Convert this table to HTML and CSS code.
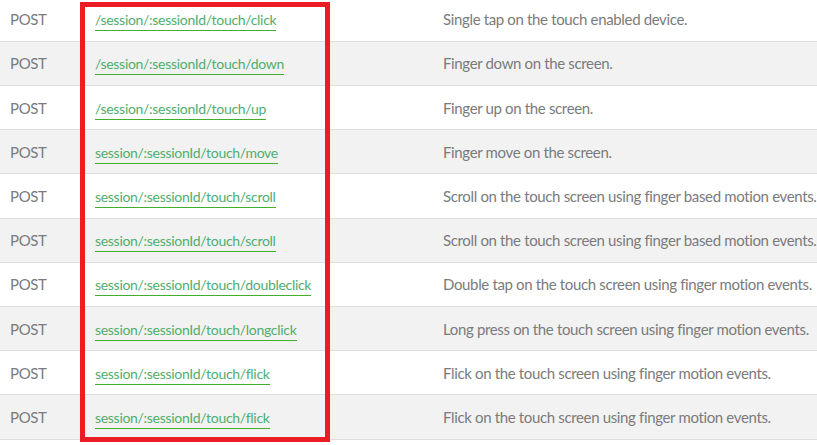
FILE: index.html
```html
<!DOCTYPE html>
<html>
<head>
<meta charset="utf-8">
<link rel="stylesheet" href="styles.css">
</head>
<body>
<div class="page">
  <table class="api">
    <tbody>
      <tr><td class="method">POST</td><td class="path"><a href="#">/session/:sessionId/touch/click</a></td><td class="desc">Single tap on the touch enabled device.</td></tr>
      <tr class="alt"><td class="method">POST</td><td class="path"><a href="#">/session/:sessionId/touch/down</a></td><td class="desc">Finger down on the screen.</td></tr>
      <tr><td class="method">POST</td><td class="path"><a href="#">/session/:sessionId/touch/up</a></td><td class="desc">Finger up on the screen.</td></tr>
      <tr class="alt"><td class="method">POST</td><td class="path"><a href="#">session/:sessionId/touch/move</a></td><td class="desc">Finger move on the screen.</td></tr>
      <tr><td class="method">POST</td><td class="path"><a href="#">session/:sessionId/touch/scroll</a></td><td class="desc">Scroll on the touch screen using finger based motion events.</td></tr>
      <tr class="alt"><td class="method">POST</td><td class="path"><a href="#">session/:sessionId/touch/scroll</a></td><td class="desc">Scroll on the touch screen using finger based motion events.</td></tr>
      <tr><td class="method">POST</td><td class="path"><a href="#">session/:sessionId/touch/doubleclick</a></td><td class="desc">Double tap on the touch screen using finger motion events.</td></tr>
      <tr class="alt"><td class="method">POST</td><td class="path"><a href="#">session/:sessionId/touch/longclick</a></td><td class="desc">Long press on the touch screen using finger motion events.</td></tr>
      <tr><td class="method">POST</td><td class="path"><a href="#">session/:sessionId/touch/flick</a></td><td class="desc">Flick on the touch screen using finger motion events.</td></tr>
      <tr class="alt"><td class="method">POST</td><td class="path"><a href="#">session/:sessionId/touch/flick</a></td><td class="desc">Flick on the touch screen using finger motion events.</td></tr>
    </tbody>
  </table>
  <div class="highlight"></div>
</div>
</body>
</html>
```

FILE: styles.css
```css
html, body {
  margin: 0;
  padding: 0;
  background: #fff;
}
.page {
  position: relative;
  width: 817px;
  height: 445px;
  overflow: hidden;
}
.api {
  border-collapse: collapse;
  margin-top: -3px;
  width: 900px;
  table-layout: fixed;
  font-family: Lato, "Open Sans", sans-serif;
  font-size: 15px;
  letter-spacing: -0.35px;
  color: #7b7b7b;
}
.api tr {
  height: 44.22px;
  border-bottom: 1px solid #dedede;
  background: #fff;
}
.api tr.alt {
  background: #f2f2f2;
}
.api td {
  padding: 0 0 0 10px;
  vertical-align: middle;
  white-space: nowrap;
}
.api td.method {
  width: 70px;
}
.api td.path {
  width: 338px;
  padding-left: 15px;
}
.api td.desc {
  padding-left: 10px;
}
.api a {
  font-size: 14px;
  letter-spacing: -0.3px;
  color: #4fae6e;
  text-decoration: none;
  border-bottom: 1px solid #42ae2e;
  padding-bottom: 2px;
}
.highlight {
  position: absolute;
  left: 80px;
  top: 2px;
  width: 240px;
  height: 430px;
  border: 5px solid #ec1c24;
}
```
